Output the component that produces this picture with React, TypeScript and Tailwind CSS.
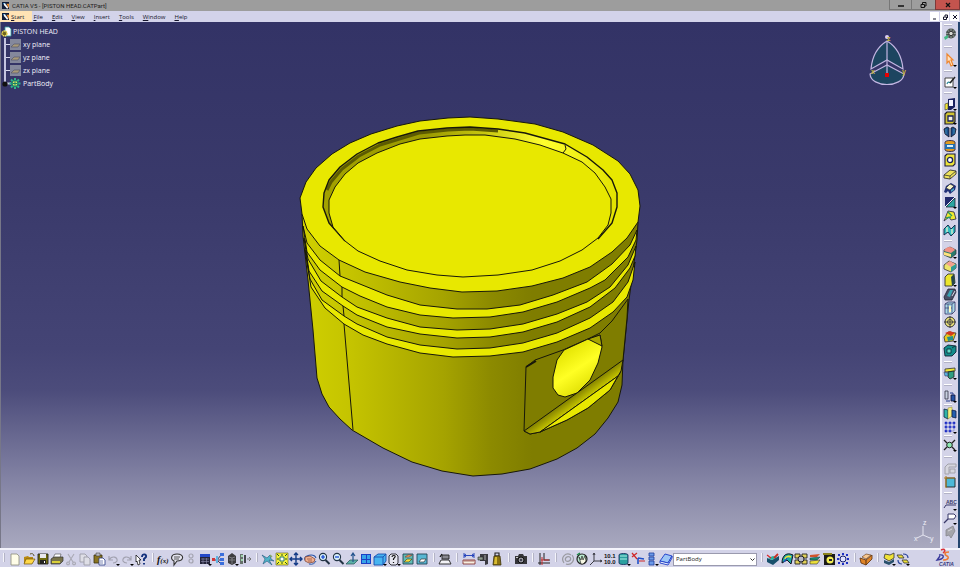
import React from "react";

const ink = "#15152b";

/* ---------- icon artwork, drawn on a 14 x 14 grid ---------- */

const Drop = () => <path d="M10 12h4l-2 2z" fill="#000" />;

const icons: Record<string, React.ReactNode> = {
  New: <path d="M3 2h6l2 2v9H3z" fill="#fffde8" stroke="#8a8a7a" strokeWidth=".8" />,
  Open: <g><path d="M2 5l4-1 1 1h4v6H2z" fill="#b98a14" /><path d="M4 7h9l-3 5H2z" fill="#ffd84a" stroke="#6e5208" strokeWidth=".7" /><path d="M8 2c2-1 4 0 4 2" fill="none" stroke="#5a5020" /></g>,
  Save: <g><path d="M2 2h10v10H2z" fill="#6e6a10" stroke="#222" strokeWidth=".9" /><path d="M4 2h6v4H4z" fill="#e8e8f0" /><path d="M4 8h6v4H4z" fill="#222" /><path d="M8 9h1v2H8z" fill="#fff" /></g>,
  Print: <g><path d="M5 2h6l-1 4H3z" fill="#fff" stroke="#444" strokeWidth=".6" /><path d="M1 7l3-2h9v4l-3 3H1z" fill="#77724a" stroke="#333" strokeWidth=".7" /><path d="M2 9h8v2H2z" fill="#d9cf3a" /></g>,
  Cut: <path d="M4 2l5 8M10 2L5 10M4 10a1.400 1.400 0 1 0 .1 0M10 10a1.400 1.400 0 1 0 .1 0" fill="none" stroke="#a9a9b4" strokeWidth="1.100" />,
  Copy: <g fill="#dedee6" stroke="#9c9ca8" strokeWidth=".9"><path d="M2 2h5l2 2v6H2z" /><path d="M6 5h4l2 2v6H6z" /></g>,
  Paste: <g><path d="M2 3h8v8H2z" fill="#8a7420" stroke="#3a3210" strokeWidth=".8" /><path d="M4 1h4v3H4z" fill="#b9b9c4" stroke="#333" strokeWidth=".5" /><path d="M7 6h4l2 2v5H7z" fill="#fff" stroke="#2a3a86" strokeWidth=".8" /><path d="M8 9h3M8 11h3" stroke="#2a3a86" strokeWidth=".6" /></g>,
  Undo: <g><path d="M3 4v4h4M3 8c3-5 9-3 8 1-1 2-3 2-4 2" fill="none" stroke="#a2a2b0" strokeWidth="1.200" /><Drop /></g>,
  Redo: <g><path d="M11 4v4H7M11 8c-3-5-9-3-8 1 1 2 3 2 4 2" fill="none" stroke="#a2a2b0" strokeWidth="1.200" /><Drop /></g>,
  "What's This?": <g><path d="M2 3l5 5H5l1 4-2 1-1-4-1 1z" fill="#fff" stroke="#000" strokeWidth=".7" /><path d="M8 5c0-4 5-3 4 0l-2 2v2M10 11v1.500" fill="none" stroke="#12307c" strokeWidth="1.900" /></g>,
  Formula: <text x="0" y="11" fontSize="10" fontStyle="italic" fontWeight="bold" fontFamily="Liberation Serif, serif" fill="#111">f<tspan fontSize="7">(x)</tspan></text>,
  Comment: <g><path d="M7 2c8 0 7 7 0 7l-3 4V9C0 7 1 2 7 2z" fill="#e4e4ef" stroke="#333" strokeWidth="1.100" /><path d="M4 5h6M4 7h5" stroke="#333" strokeWidth=".8" /></g>,
  "Knowledge Inspector": <g fill="none" stroke="#a4a4b0" strokeWidth="1.200"><circle cx="7" cy="4" r="2" /><circle cx="7" cy="9" r="2" /></g>,
  "Design Table": <g><path d="M2 2h10v10H2z" fill="#23233a" /><path d="M2 2h10v3H2z" fill="#2448c8" /><path d="M3 7h8M3 9.500h8M5 6v6M8.500 6v6" stroke="#8f8fae" strokeWidth=".6" /><Drop /></g>,
  Structure: <g><path d="M2 8h4M6 8l4-5M6 8h5M6 8l4 4" stroke="#324" strokeWidth=".9" fill="none" /><path d="M1 6h3v3H1z" fill="#d23838" /><path d="M9 1h4v3H9zM9 6h4v3H9zM9 10h4v3H9z" fill="#3a6edc" /><path d="M5 4h2v7H5z" fill="#62b4e0" /></g>,
  Lock: <g><path d="M3 4l4-3 4 3v7l-4 2-4-2z" fill="#3d3d40" /><path d="M4 5l3 1v6M10 5L7 6M4 8h6" stroke="#8b8b90" fill="none" strokeWidth=".8" /><Drop /></g>,
  Equivalent: <g><path d="M2 2h3v10H2z" fill="#68726c" /><path d="M3 3h2v2H3zM3 7h2v2H3z" fill="#9fd4ae" /><path d="M6 3h2v8H6z" fill="#43464c" /><path d="M9 7h4M11 5l2 2-2 2" stroke="#777" fill="none" /></g>,
  "Fly Mode": <g><path d="M1 3l5 3 3-3 1 4 3 2-5-1 3 5-5-4-4 3 2-5z" fill="#4fb4c8" stroke="#23557c" strokeWidth=".6" /><path d="M9 3l2 2" stroke="#8a6" strokeWidth="1.500" /></g>,
  "Fit All In": <g><path d="M1 1h12v12H1z" fill="#f6f23a" stroke="#59591a" strokeWidth=".6" /><path d="M5 5h4v4H5z" fill="#fff" stroke="#276" /><path d="M2 2l2 2M12 2l-2 2M2 12l2-2M12 12l-2-2M7 2v2M7 10v2M2 7h2M10 7h2" stroke="#24502c" fill="none" /></g>,
  Pan: <path d="M7 1v12M1 7h12M5 3l2-2 2 2M5 11l2 2 2-2M3 5L1 7l2 2M11 5l2 2-2 2" fill="none" stroke="#123a86" strokeWidth="1.400" />,
  Rotate: <g><path d="M2 8c-2-5 9-7 11-2" fill="none" stroke="#2a55a8" strokeWidth="1.100" /><path d="M2 5l5-1 5 3-1 3-5 1-4-2z" fill="#f0b090" stroke="#7a3a28" strokeWidth=".7" /><path d="M4 7h5M5 9h4" stroke="#7a3a28" strokeWidth=".6" /><path d="M6 12c4 1 6-1 7-3" stroke="#2a55a8" fill="none" /></g>,
  "Zoom In": <g><circle cx="6" cy="5" r="3.600" fill="#d7f0fa" stroke="#234" strokeWidth="1.100" /><path d="M8.500 8l4 4" stroke="#234" strokeWidth="2" /><path d="M4 5h4M6 3v4" stroke="#0a3cd0" strokeWidth="1.200" /></g>,
  "Zoom Out": <g><circle cx="6" cy="5" r="3.600" fill="#d7f0fa" stroke="#234" strokeWidth="1.100" /><path d="M8.500 8l4 4" stroke="#234" strokeWidth="2" /><path d="M4 5h4" stroke="#0a3cd0" strokeWidth="1.200" /></g>,
  "Normal View": <g><path d="M1 12l4-4h8l-4 4z" fill="#5bb0a8" stroke="#255" strokeWidth=".7" /><path d="M8 10V2M6 4l2-3 2 3" stroke="#22528c" strokeWidth="1.200" fill="none" /></g>,
  "Multi View": <g><path d="M2 2h10v10H2z" fill="#1c3fc4" /><path d="M3 3h4v4H3zM8 3h3v4H8zM3 8h4v3H3zM8 8h3v3H8z" fill="#36a4e8" /></g>,
  "Isometric View": <g><path d="M1 5l4-3h8v7l-3 4H1z" fill="#48b4f0" stroke="#1a4eb0" strokeWidth=".9" /><path d="M1 5h9v8M10 5l3-3" fill="none" stroke="#1a4eb0" strokeWidth=".9" /><Drop /></g>,
  "View Mode": <g><path d="M4 2h5l2 2v7l-2 2H4l-2-2V4z" fill="#e6e6f0" stroke="#33333c" strokeWidth="1" /><path d="M5 5c0-2 4-2 3 0L6.500 7v1M6.500 10v1" stroke="#111" fill="none" strokeWidth="1.200" /><Drop /></g>,
  "Hide Show": <g><path d="M2 2h10v10H2z" fill="#5fbcb4" stroke="#245" strokeWidth=".9" /><path d="M3 10l3-3h5l-3 3z" fill="#f3e23c" stroke="#333" strokeWidth=".6" /><path d="M4 5l3-2h4l-3 2z" fill="#f0b060" stroke="#833" strokeWidth=".6" /></g>,
  "Swap Visible Space": <g><path d="M2 2h10v10H2z" fill="#58b6d2" stroke="#245" strokeWidth=".9" /><path d="M4 10l2-3h5l-2 3z" fill="#fff" stroke="#333" strokeWidth=".7" /></g>,
  Turntable: <g><path d="M3 8h8l2 4H1z" fill="#f2f2f6" stroke="#222" strokeWidth=".9" /><path d="M4 3h7v4H4z" fill="#888890" stroke="#222" strokeWidth=".9" /><path d="M2 5l2-3" stroke="#111" strokeWidth="1.300" /></g>,
  "Measure Between": <g><path d="M2 1v5M12 1v5M2 3.500h10M4 2L2 3.500 4 5M10 2l2 1.500L10 5" stroke="#1738b8" fill="none" strokeWidth=".9" /><path d="M1 8h12v4H1z" fill="#f7efe0" stroke="#7c2424" strokeWidth=".8" /><path d="M3 8v2M5 8v2M7 8v2M9 8v2M11 8v2" stroke="#7c2424" strokeWidth=".6" /></g>,
  "Measure Item": <g><path d="M4 2h8v10l-3 1V9H4z" fill="#3c3c42" /><path d="M2 5h5v3H2z" fill="#8f9c8f" stroke="#222" strokeWidth=".6" /><path d="M9 3v5" stroke="#aaa" /></g>,
  "Measure Inertia": <g><path d="M5 1h4v3H5z" fill="none" stroke="#222" strokeWidth="1.100" /><path d="M4 4h6l1 9H3z" fill="#8b7211" stroke="#3a3008" strokeWidth=".8" /><path d="M5 5h2v7H4z" fill="#d8bb32" /></g>,
  Capture: <g><path d="M1 4h3l1-2h4l1 2h3v8H1z" fill="#36363a" /><circle cx="7" cy="8" r="3" fill="#96969e" stroke="#111" /><circle cx="7" cy="8" r="1" fill="#223" /><path d="M2 5h2v1H2z" fill="#ccc" /></g>,
  "Axis Grid": <g><path d="M3 1v10h10M7 1v7h6M1 11h2v2" fill="none" stroke="#222" strokeWidth="1" /><path d="M4 8h8M5 5v8" stroke="#c22a2a" strokeWidth="1" /></g>,
  Update: <g fill="none" stroke="#999aa0" strokeWidth="1.200"><path d="M3 11C-1 5 5 0 10 3M11 3c4 5-1 11-6 9" /><path d="M5 9c-2-3 1-5 4-4M9 5c2 3-1 5-4 4" /></g>,
  "Manual Update": <g><circle cx="7" cy="7" r="5" fill="#b8e8d0" stroke="#222" strokeWidth="1.200" /><path d="M4 5l2 3 1-4 1 4 2-4 1 5-3 3H6z" fill="#f7f7e4" stroke="#222" strokeWidth=".7" /><path d="M2 3l3-2" stroke="#198a45" strokeWidth="1.500" /></g>,
  "Axis System": <path d="M5 1v8h8M5 9l-4 4M4 3l1-2 1 2M11 8l2 1-2 1" stroke="#3c3c44" fill="none" strokeWidth="1" />,
  "Mean Dimensions": <g fontSize="6" fontWeight="bold" fontFamily="Liberation Sans, sans-serif" fill="#111"><text x="1" y="6">10.1</text><text x="1" y="12">10.0</text></g>,
  "Create Datum": <g><path d="M2 3c0-2 9-2 9 0v8c0 2-9 2-9 0z" fill="#2ba0a0" stroke="#125" strokeWidth=".8" /><path d="M3 4h7M3 7h7" stroke="#aef0e8" /><Drop /></g>,
  "Only Part": <g><path d="M7 6l6 1M7 6v6" stroke="#2050c8" strokeWidth="1.600" fill="none" /><path d="M1 1l5 6M6 1L1 5M8 9h6" stroke="#d02828" strokeWidth="1.200" /></g>,
  "Select Body": <g><path d="M4 1h5v3H4zM4 5h5v3H4zM4 9h5v4H4z" fill="#6c9ae8" stroke="#1c3c9c" strokeWidth=".8" /><Drop /></g>,
  "Catalog Browser": <g><path d="M1 9l5-7 7 2-4 7z" fill="#9cc6f6" stroke="#1a3ac8" strokeWidth=".9" /><path d="M1 9v2l8 2 4-7V4L9 11z" fill="#f2f6ff" stroke="#1a3ac8" strokeWidth=".9" /></g>,
  "Draft Analysis": <g><path d="M1 6l5 2 7-4v4l-6 5-6-3z" fill="#17506c" /><path d="M2 6l5-2 4 1-5 3z" fill="#26b49c" /><path d="M8 6l4-4" stroke="#ca2c20" strokeWidth="1.800" /><path d="M1 3l4 3" stroke="#d22" strokeWidth="1.100" /></g>,
  "Curvature Analysis": <g><path d="M2 11C2 3 7 0 13 3l-2 9-4-4z" fill="#1fa9a0" stroke="#112" strokeWidth="1" /><path d="M5 7c1-3 4-3 6-2" stroke="#f0e33a" strokeWidth="1.600" fill="none" /><path d="M4 10l3-4" stroke="#2146c8" strokeWidth="1.200" /></g>,
  "Tap Analysis": <g><path d="M1 2h5v4H1zM8 2h5v4H8zM1 8h5v4H1zM8 8h5v4H8z" fill="#e2d15a" stroke="#222" strokeWidth=".9" /><circle cx="7" cy="7" r="3" fill="#b9b9c8" stroke="#222" /></g>,
  "Wall Thickness": <g><path d="M2 3l10-1-3 3H2z" fill="#d2542c" /><path d="M2 6l10-1-3 3H2z" fill="#1b8a6c" stroke="#134" strokeWidth=".5" /><path d="M2 9l10-1-3 4H2z" fill="#ece03a" stroke="#333" strokeWidth=".6" /></g>,
  Render: <g><path d="M2 2h11v11H2z" fill="#1a1a1a" /><path d="M1 1h9v2H1z" fill="#8c841d" /><circle cx="8" cy="8" r="3.500" fill="#f3ee54" /><path d="M7 7h3v2H7z" fill="#223" /></g>,
  "Apply Material": <g fill="#1d2fc4"><path d="M2 2h2v2H2zM6 1h2v2H6zM10 2h2v2h-2zM1 6h2v2H1zM11 6h2v2h-2zM2 10h2v2H2zM6 11h2v2H6zM10 10h2v2h-2z" /><circle cx="7" cy="7" r="3" fill="#dfe2ff" stroke="#16206c" /></g>,
  "Power Copy": <g><path d="M1 6l6 2 6-5v4l-6 6-5-2z" fill="#df8428" stroke="#5c300a" strokeWidth=".8" /><path d="M3 5l4-3 5 1-5 4z" fill="#f7c690" stroke="#5c300a" strokeWidth=".6" /><path d="M7 8v5" stroke="#5c300a" /></g>,
  "User Feature": <g><path d="M3 2l5 1 4-2v5L7 9 2 6z" fill="#f0e238" stroke="#333" strokeWidth=".8" /><path d="M2 8l5 2 5-3v3l-5 3-5-2z" fill="#28506c" /><Drop /></g>,
  Instantiate: <g><path d="M1 3h5l2 3H3zM6 8h5l2 3H8z" fill="#f0e238" stroke="#333" strokeWidth=".8" /><path d="M7 2c4 0 5 2 5 4M2 8c0 3 2 4 4 4" stroke="#28429c" strokeWidth="1.200" fill="none" /><Drop /></g>,

  "Part Design": <g><circle cx="8" cy="6.500" r="5" fill="#4b5450" /><path d="M8 1v11M3 6.500h10M4.500 3l7 7M11.500 3l-7 7" stroke="#9ba29c" strokeWidth=".9" /><circle cx="8" cy="6.500" r="2.200" fill="#d5d8d2" stroke="#333" /><path d="M1 10l4-2v3l-3 2z" fill="#43b884" /></g>,
  Select: <g><path d="M4 1l6 6H8l2 5-2 1-2-5-2 2z" fill="#ffe2bf" stroke="#f0862c" strokeWidth="1.200" /><Drop /></g>,
  Sketch: <g><path d="M2 3h8v9H2z" fill="#fff" stroke="#333" strokeWidth=".9" /><path d="M4 9c1-4 3 0 4-2" stroke="#2a8a9c" fill="none" strokeWidth="1.200" /><path d="M7 8l5-6" stroke="#222" strokeWidth="1.500" /><Drop /></g>,
  Pad: <g><path d="M5 2l7-1v9l-4 3H5z" fill="#18205e" /><path d="M6 3h4v6H6z" fill="#f4f4ff" /><path d="M2 7l3-1v6l-3 1z" fill="#f2e63a" stroke="#333" strokeWidth=".6" /><Drop /></g>,
  Pocket: <g><path d="M2 3l2-2h8v10l-2 2H2z" fill="#cfc332" stroke="#1b1b30" strokeWidth="1.200" /><path d="M5 5h5v5H5z" fill="#f5f3e0" stroke="#18205e" strokeWidth="1.300" /><Drop /></g>,
  Shaft: <g><path d="M1 4l3-2 2 1v9l-4-3zM8 3l2-1 3 2-1 5-4 3z" fill="#1c4f8c" stroke="#112" strokeWidth=".8" /><path d="M3 4v5M11 4v5" stroke="#4a9ab8" strokeWidth=".8" /></g>,
  Groove: <g><path d="M2 3c1-2 9-2 10 0v8c-1 2-9 2-10 0z" fill="#e29c1e" stroke="#262650" strokeWidth=".9" /><path d="M2 5h10v5H2z" fill="#256fae" /><path d="M4 6h6v2H4z" fill="#d8f0fa" /></g>,
  Hole: <g><path d="M2 3l2-2h8v10l-2 2H2z" fill="#ede43a" stroke="#1b1b40" strokeWidth="1.100" /><circle cx="7" cy="7" r="2.600" fill="#fff" stroke="#18205e" strokeWidth="1.300" /></g>,
  Rib: <g><path d="M1 8l6-5 6 1v3l-6 5-6-1z" fill="#ede25a" stroke="#333" strokeWidth=".9" /><path d="M1 8l6 1 6-5M7 9v3" fill="none" stroke="#333" strokeWidth=".8" /></g>,
  Slot: <g><path d="M1 11l2-6 5-3 5 3-1 4-5 4-2-3-2 2z" fill="#1f2f78" /><path d="M3 7l4-4 4 2-4 4z" fill="#f8f4c8" stroke="#222" strokeWidth=".6" /><path d="M8 9l3-2v2l-3 2z" fill="#4aa6c4" /></g>,
  Stiffener: <g><path d="M2 2h10L2 12z" fill="#20286c" /><path d="M12 3v9H3z" fill="#2aa5a0" stroke="#112" strokeWidth=".7" /><path d="M2 12L12 2" stroke="#e8f4ff" /><Drop /></g>,
  Loft: <g><path d="M1 12l4-10 6 1 2 7-5 1-2-3z" fill="#f0ea30" stroke="#224" strokeWidth=".8" /><path d="M5 3l4 4M3 9l5-1" stroke="#2a9a60" strokeWidth="1.400" /></g>,
  "Removed Loft": <g><path d="M1 12V6l4-4 3 4 4-4v7l-4 4-3-4z" fill="#34bcc0" stroke="#124" strokeWidth=".9" /><path d="M4 4v5M9 6v5" stroke="#f6f6d0" strokeWidth="1.200" /></g>,
  Fillet: <g><path d="M1 8V5l6-3 6 3v4l-5 4-7-3z" fill="#2a7c6c" stroke="#333" strokeWidth=".7" /><path d="M1 6c2-5 8-5 11-1L8 8z" fill="#f09084" /><path d="M1 7l7 2v3l-7-2z" fill="#ffe27c" /><Drop /></g>,
  Chamfer: <g><path d="M1 6l5-4 7 3v4l-5 4-7-3z" fill="#ede46a" stroke="#333" strokeWidth=".8" /><path d="M3 5l4-3 5 3-4 3z" fill="#f3a090" /><path d="M8 8l5-3v4l-5 4z" fill="#2e9c98" /></g>,
  "Draft Angle": <g><path d="M2 4l3-3h6l1 9-3 3H2z" fill="#ece52c" stroke="#333" strokeWidth=".9" /><path d="M8 4l3-3 1 9-3 3z" fill="#27464c" /><Drop /></g>,
  Shell: <g><path d="M1 10L5 2h7l1 3-4 8H2z" fill="#4a4f68" stroke="#223" strokeWidth=".8" /><path d="M4 9l3-6h3l-3 7z" fill="#3ba4b4" /><path d="M9 9l3-5" stroke="#d5d6e4" /></g>,
  Thickness: <g><path d="M2 3l3-2h7v9l-3 3H2z" fill="#a8d8e8" stroke="#336" strokeWidth=".8" /><path d="M2 3h7v10M9 3l3-2M5 3v9M2 7h7" stroke="#336" fill="none" strokeWidth=".7" /><path d="M6 5h2v6H6z" fill="#fffbc0" /></g>,
  Thread: <g><circle cx="7" cy="7" r="5" fill="#efe57a" stroke="#333" strokeWidth="1" /><circle cx="7" cy="7" r="2.500" fill="none" stroke="#555" /><path d="M7 1v12M1 7h12" stroke="#223" strokeWidth=".8" /></g>,
  "Split Body": <g><path d="M1 8l4-5 8 1-3 8-8 1z" fill="#e8c81e" stroke="#333" strokeWidth=".8" /><path d="M2 4l5-2 5 2-4 3z" fill="#d23a20" /><path d="M4 8l6-1v4l-5 1z" fill="#25908c" /><Drop /></g>,
  "Thick Surface": <g><path d="M1 5l4-3 8 1v6l-4 4H2z" fill="#138c8a" stroke="#123" strokeWidth=".9" /><path d="M4 6h4v4H4zM9 5l3-2" fill="#64dcc8" stroke="#123" strokeWidth=".8" /></g>,
  Assemble: <g><path d="M2 3l10-1v3l-10 1z" fill="#f0e636" stroke="#333" strokeWidth=".8" /><path d="M5 6l6-1v6l-4 2-2-2z" fill="#2f9c80" stroke="#222" strokeWidth=".8" /><path d="M1 6l4 1v3H2z" fill="#5bb2de" stroke="#224" strokeWidth=".5" /><Drop /></g>,
  Translation: <g><path d="M2 2h3v8H2z" fill="#c8d0e0" stroke="#334" strokeWidth=".8" /><path d="M8 6h4v6H8z" fill="#2453a4" stroke="#113" strokeWidth=".8" /><path d="M3 12h4M7 4h3v2" stroke="#223a8c" fill="none" /><Drop /></g>,
  Mirror: <g><path d="M1 3l4 1v9l-4-2z" fill="#2fb4a8" stroke="#124" strokeWidth=".8" /><path d="M5 2l4-1v9l-4 3z" fill="#f4ef84" stroke="#8a8430" strokeWidth=".5" /><path d="M9 4l4 1v7l-4-1z" fill="#235fae" stroke="#124" strokeWidth=".8" /></g>,
  Pattern: <g><path d="M2 2h2v2H2zM6 2h2v2H6zM10 2h2v2h-2zM2 6h2v2H2zM6 6h2v2H6zM10 6h2v2h-2zM2 10h2v2H2zM6 10h2v2H6z" fill="#1b28c4" stroke="#1b28c4" strokeWidth=".5" /><path d="M3 3h8v8H3zM7 3v8M3 7h8" fill="none" stroke="#5a64cc" strokeWidth=".5" /><Drop /></g>,
  Scaling: <g><path d="M1 2l3 3M12 2L9 5M1 12l3-3M12 12L9 9" stroke="#222" strokeWidth="1.300" /><circle cx="6.500" cy="7" r="2.800" fill="#8ce8b0" stroke="#222" /><Drop /></g>,
  Group: <g fill="#d5d5de" stroke="#a2a2aa"><path d="M2 6l3-3h8v3H6v7H2z" /><path d="M7 8h5v4H7z" /></g>,
  "Bounding Box": <g><path d="M3 3h9v9H3z" fill="#4cb8d8" stroke="#222" strokeWidth=".9" /><path d="M1 3h11M3 1v12" stroke="#b08022" strokeWidth="1.100" /></g>,
  "Text with Leader": <g><text x="3" y="7" fontSize="5" fontWeight="bold" fontFamily="Liberation Sans, sans-serif" fill="#39396a">ABC</text><path d="M1 11l2-3h10" stroke="#39396a" fill="none" /><Drop /></g>,
  "Flag Note": <g><path d="M5 3h6l2 2-2 3H5z" fill="#fff" stroke="#39396a" /><path d="M5 8l-4 4" stroke="#39396a" strokeWidth="1.300" /><Drop /></g>,
  "View Plane": <g><path d="M3 5l7-4 2 5-4 7-2-3-3 1z" fill="#a5a5ab" stroke="#85858d" strokeWidth=".8" /><path d="M5 6l4-2" stroke="#d5d5da" /></g>,
};

type BarGroup = { names: string[]; gap: string; width?: string };

const bottomGroups: BarGroup[] = [
  { gap: "w-2", names: ["New", "Open", "Save", "Print", "Cut", "Copy", "Paste", "Undo", "Redo", "What's This?"] },
  { gap: "w-[9px]", width: "w-[95px]", names: ["Formula", "Comment", "Knowledge Inspector", "Design Table", "Structure", "Lock", "Equivalent"] },
  { gap: "w-[9px]", names: ["Fly Mode", "Fit All In", "Pan", "Rotate", "Zoom In", "Zoom Out", "Normal View", "Multi View", "Isometric View", "View Mode", "Hide Show", "Swap Visible Space"] },
  { gap: "w-[9px]", names: ["Turntable"] },
  { gap: "w-[10px]", names: ["Measure Between", "Measure Item", "Measure Inertia"] },
  { gap: "w-[10px]", names: ["Capture"] },
  { gap: "w-[9px]", names: ["Axis Grid"] },
  { gap: "w-[10px]", names: ["Update", "Manual Update", "Axis System", "Mean Dimensions", "Create Datum", "Only Part", "Select Body", "Catalog Browser"] },
];

const analysisGroups: BarGroup[] = [
  { gap: "w-[9px]", names: ["Draft Analysis", "Curvature Analysis", "Tap Analysis", "Wall Thickness", "Render", "Apply Material"] },
  { gap: "w-[9px]", names: ["Power Copy"] },
  { gap: "w-[9px]", names: ["User Feature", "Instantiate"] },
];

const sideGroups: { names: string[]; gap: string }[] = [
  { gap: "h-[5px]", names: ["Part Design"] },
  { gap: "h-3", names: ["Select"] },
  { gap: "h-2", names: ["Sketch"] },
  { gap: "h-2", names: ["Pad", "Pocket", "Shaft", "Groove", "Hole", "Rib", "Slot", "Stiffener", "Loft", "Removed Loft"] },
  { gap: "h-2", names: ["Fillet", "Chamfer", "Draft Angle", "Shell", "Thickness", "Thread", "Split Body", "Thick Surface"] },
  { gap: "h-[9px]", names: ["Assemble"] },
  { gap: "h-[9px]", names: ["Translation"] },
  { gap: "h-[3px]", names: ["Mirror", "Pattern"] },
  { gap: "h-1", names: ["Scaling"] },
  { gap: "h-[9px]", names: ["Group", "Bounding Box"] },
  { gap: "h-2", names: ["Text with Leader", "Flag Note", "View Plane"] },
];

function Tool({ name }: { name: string }) {
  return (
    <button type="button" aria-label={name} className="flex h-[14px] w-[14px] min-w-0 shrink items-center justify-center">
      <svg viewBox="0 0 14 14" className="h-[14px] w-[14px] shrink-0 overflow-visible" aria-hidden="true">{icons[name]}</svg>
    </button>
  );
}

function BottomGroup({ names, gap, width = "" }: BarGroup) {
  return (
    <>
      <div className={`${gap} flex h-3 shrink-0 items-start justify-center`}>
        <div className="h-[9px] w-[2px] border-r border-[#b4b4c6] bg-[#f4f4fa]" />
      </div>
      <div className={`flex shrink-0 items-center ${width}`} role="group">
        {names.map((n) => <Tool key={n} name={n} />)}
      </div>
    </>
  );
}

function AppLogo() {
  return (
    <svg viewBox="0 0 8 8" className="h-[7px] w-[7px] shrink-0" aria-hidden="true">
      <path d="M0 0h8v8H0z" fill="#101c38" />
      <path d="M1 1h3L3 4z" fill="#4ea6e0" />
      <path d="M3 1l4 5-1 2-4-5z" fill="#fff" />
      <path d="M5 2h3v5z" fill="#f09030" />
    </svg>
  );
}

const menus = ["File", "Edit", "View", "Insert", "Tools", "Window", "Help"];

function MenuLabel({ text }: { text: string }) {
  return <><span className="underline">{text[0]}</span>{text.slice(1)}</>;
}

/* ---------- 3D view ---------- */

const outer = "300,198 306,182 316,168 332,154 350,143 371,134 397,126 420,121 448,118 470,117 498,119 535,124 563,132 593,145 618,161 630,174 638,190 640,206 638,222 627,238 612,252 590,267 563,278 532,286 497,291 462,292 430,288 400,282 365,272 339,260 320,246 307,229 302,214";
const rim = "323,207 324,193 329,180 340,167 357,154 378,143 397,137 418,131 447,128 470,127 498,129 525,133 565,144 587,157 603,170 612,180 617,193 617,207 612,223 598,239 560,261 463,277 380,261 345,241 329,223";
const floor = "329,200 329,213 333,227 345,241 358,251 380,261 407,270 437,275 463,277 498,275 532,270 560,261 582,250 598,238 608,225 611,213 611,199 605,187 595,173 582,162 563,153 540,145 515,139 485,135 465,135 447,136 420,139 400,144 377,153 358,163 345,174 335,187";
const body = "302,214 303,236 308,280 313,330 317,378 322,394 329,407 340,419 352,430 383,448 412,462 442,471 473,476 502,474 530,469 557,459 577,448 595,434 608,418 618,402 622,385 623,360 629,300 633,270 637,240 638,222 470,200";
const rings = [
  "303,226 307,243 320,260 340,276 350,280 387,295 420,305 457,309 487,309 520,305 553,295 587,282 612,264 630,245 637,230 636,240 628,257 605,280 590,288 557,302 523,312 490,317 453,318 420,315 387,307 360,296 342,287 320,270 307,252",
  "304,238 308,259 321,281 342,297 357,307 387,318 420,327 457,330 490,329 523,324 557,314 587,302 610,287 628,265 636,246 635,256 630,268 615,288 590,307 557,322 523,332 490,337 457,338 420,334 387,327 357,315 343,306 322,291 309,271",
  "305,250 310,279 322,300 344,316 357,324 387,337 420,345 457,349 490,348 523,343 557,333 590,318 613,302 628,282 635,262 633,280 627,297 613,312 590,328 557,342 523,352 490,356 453,357 420,353 387,344 363,335 344,324 325,308 311,287",
];

function PistonModel() {
  return (
    <svg viewBox="1 22 939 526" className="absolute inset-0 h-full w-full" role="img" aria-label="Piston head model">
      <defs>
        <linearGradient id="side" gradientUnits="userSpaceOnUse" x1="302" y1="0" x2="640" y2="0">
          <stop offset="0" stopColor="#d0d000" />
          <stop offset=".15" stopColor="#c4c300" />
          <stop offset=".42" stopColor="#a5a300" />
          <stop offset=".56" stopColor="#8c8a00" />
          <stop offset=".68" stopColor="#7f7d00" />
          <stop offset="1" stopColor="#7f7d00" />
        </linearGradient>
        <linearGradient id="groove" gradientUnits="userSpaceOnUse" x1="323" y1="0" x2="617" y2="0">
          <stop offset="0" stopColor="#a3a200" />
          <stop offset=".35" stopColor="#9a9900" />
          <stop offset=".55" stopColor="#c8c710" />
          <stop offset=".75" stopColor="#ffff2e" />
          <stop offset="1" stopColor="#e2e200" />
        </linearGradient>
        <linearGradient id="bore" gradientUnits="userSpaceOnUse" x1="560" y1="350" x2="588" y2="392">
          <stop offset="0" stopColor="#e2e200" />
          <stop offset=".5" stopColor="#ffff24" />
          <stop offset="1" stopColor="#dcdb00" />
        </linearGradient>
        <linearGradient id="ledge" gradientUnits="userSpaceOnUse" x1="570" y1="397" x2="578" y2="408">
          <stop offset="0" stopColor="#7f7d00" />
          <stop offset="1" stopColor="#d9d800" />
        </linearGradient>
      </defs>
      <g stroke="#17170a" strokeWidth="1" strokeLinejoin="round">
        <polygon points={body} fill="url(#side)" />
        {rings.map((r) => <polygon key={r} points={r} fill="#e8e800" />)}
        <polygon points={outer} fill="#e8e800" />
        <polygon points={rim} fill="url(#groove)" stroke="none" />
        <path d="M327 190L331 182 342 169 359 156 380 145 419 133 448 130 470 129 498 131" fill="none" stroke="#5c5b00" strokeWidth="3" />
        <path d="M345 241L329 223 323 207 324 193 329 180 340 167 357 154 378 143 397 137 418 131 447 128 470 127 498 129 525 133 565 144 587 157 603 170 612 180 617 193 617 207 612 223 598 239" fill="none" strokeWidth="1.400" />
        <polygon points={floor} fill="#e8e800" />
        <path d="M563 153l3-4-1-4" fill="none" />
        <path d="M339 260l1 16M342 287v10M343 306l1 10M344 324l9 106" fill="none" />
        <polygon points="526,367 535,360 563,350 590,338 600,333 612,321 628,299 627,318 623,360 620,373 610,390 588,408 567,420 540,432 530,434 524,431" fill="#7f7d00" />
        <path d="M526 367l10-6" fill="none" strokeWidth="2" />
        <polygon points="564,350 557,360 553,377 553,388 558,395 565,397 577,393 590,380 598,363 602,347 600,335 588,339" fill="url(#bore)" />
        <path d="M588 339L600 335 602 346z" fill="#a7a500" />
        <polygon points="524,431 623,360 621,371 618,376 540,432 530,434" fill="url(#ledge)" />
        <polygon points="540,432 618,376 610,390 588,408 567,420" fill="#e8e800" />
      </g>
    </svg>
  );
}

function Compass() {
  return (
    <svg viewBox="0 0 42 54" className="absolute right-8 top-[11px] h-[54px] w-[42px]" role="img" aria-label="Compass">
      <g fill="#1d4560" stroke="#c3b6e2" strokeWidth="1.200">
        <path d="M21 8C11 14 6 25 5 36l16-9 16 9C36 25 31 14 21 8z" />
        <path d="M21 32L4 41c1 14 33 14 34 0z" />
        <path d="M21 8v32" />
      </g>
      <circle cx="21" cy="4" r="2" fill="#dccdf2" />
      <path d="M19 40h4v4h-4z" fill="#e60000" />
      <g fontFamily="Liberation Sans, sans-serif" fontSize="7" fontWeight="bold" fill="#c8b83c">
        <text x="21" y="8">z</text><text x="5" y="41">x</text><text x="36" y="41">y</text>
      </g>
    </svg>
  );
}

function Triad() {
  return (
    <svg viewBox="0 0 24 24" className="absolute bottom-1 right-1 h-6 w-6" aria-hidden="true">
      <path d="M11 6v9l-6 3M11 15l7 3" fill="none" stroke="#e4e4f0" />
      <g fontFamily="Liberation Sans, sans-serif" fontSize="7" fill="#f0f0f8">
        <text x="11" y="5">z</text><text x="2" y="21">x</text><text x="18" y="21">y</text>
      </g>
    </svg>
  );
}

function PlaneIcon() {
  return (
    <svg viewBox="0 0 11 11" className="h-[11px] w-[11px]" aria-hidden="true">
      <path d="M0 0h11v11H0z" fill="#84889c" />
      <path d="M1 8l3-3h6L8 8z" fill="#a99a78" stroke="#55586c" strokeWidth=".7" />
    </svg>
  );
}

function SpecTree() {
  return (
    <ul className="absolute left-0 top-[3px] text-[7px] leading-[13px] text-[#f0f0fa]">
      <li className="flex h-[13px] items-center gap-px">
        <svg viewBox="0 0 11 12" className="h-3 w-[11px]" aria-hidden="true">
          <path d="M4 1h4l2 2v7H4z" fill="#fff" stroke="#3aa0a0" strokeWidth=".8" />
          <circle cx="3.500" cy="7.500" r="2.500" fill="#6d6420" stroke="#f2de58" strokeWidth="1.500" strokeDasharray="1.500 .6" />
        </svg>
        PISTON HEAD
      </li>
      {["xy plane", "yz plane", "zx plane"].map((p) => (
        <li key={p} className="flex h-[13px] items-center">
          <span className="ml-[3px] flex h-full w-[6px] items-center border-l-2 border-[#c4c4e0]"><span className="h-px w-full bg-[#d8d8ee]" /></span>
          <PlaneIcon />
          <span className="ml-[2px]">{p}</span>
        </li>
      ))}
      <li className="flex h-[13px] items-center">
        <svg viewBox="0 0 20 13" className="h-[13px] w-5" aria-hidden="true">
          <path d="M4 0v6.500h6" stroke="#c4c4e0" strokeWidth="2" fill="none" />
          <circle cx="4" cy="7" r="2.600" fill="#111" />
          <path d="M14 1v11M8.500 6.500h11M10 2.500l8 8M18 2.500l-8 8" stroke="#2fb58c" strokeWidth="2" />
          <circle cx="14" cy="6.500" r="3" fill="#d8e85c" stroke="#17806c" strokeWidth="1.200" />
          <path d="M14 4v5M11.500 6.500h5" stroke="#17806c" />
        </svg>
        <span className="ml-[2px]">PartBody</span>
      </li>
    </ul>
  );
}

export default function App() {
  return (
    <div className="flex h-screen flex-col overflow-hidden bg-[#d5d5e8] font-['Open_Sans','Noto_Sans',sans-serif] text-[#15152b]">
      <header className="flex h-[11px] shrink-0 items-center bg-[#9d9d9d] pl-[2px] text-[6px] leading-none text-[#1c1c1c]">
        <AppLogo />
        <h1 className="ml-[3px] font-['Roboto',sans-serif]">CATIA V5 - [PISTON HEAD.CATPart]</h1>
        <div className="ml-auto flex h-full">
          <button type="button" aria-label="Minimize" className="flex h-[10px] w-[23px] items-center justify-center border-x border-b border-[#777]">
            <svg viewBox="0 0 6 6" className="h-[6px] w-[6px]"><path d="M0 4h6" stroke="#111" strokeWidth="1.500" /></svg>
          </button>
          <button type="button" aria-label="Restore" className="flex h-[10px] w-[23px] items-center justify-center border-b border-[#777]">
            <svg viewBox="0 0 7 6" className="h-[6px] w-[7px]"><path d="M1 2.500h3.500v3H1zM2.500 2V.5H6V4H5" fill="none" stroke="#111" /></svg>
          </button>
          <button type="button" aria-label="Close" className="flex h-[10px] w-[25px] items-center justify-center border-x border-b border-[#7d3a3a] bg-[#c4544e]">
            <svg viewBox="0 0 6 6" className="h-[6px] w-[6px]"><path d="M1 1l4 4M5 1L1 5" stroke="#111" strokeWidth="1.300" /></svg>
          </button>
        </div>
      </header>

      <nav aria-label="Menu" className="flex h-[11px] shrink-0 items-center bg-[#d3d3ea] text-[6px] leading-none">
        <button type="button" className="mr-px flex h-full items-center gap-[2px] bg-[#ffe3b4] pl-[2px] pr-2"><AppLogo /><span><MenuLabel text="Start" /></span></button>
        <div className="flex gap-[9px]">
          {menus.map((m) => <button key={m} type="button"><MenuLabel text={m} /></button>)}
        </div>
        <div className="ml-auto flex h-[9px] gap-px pr-px">
          {["M1 5h3", "M1.500 3h3v2.500h-3zM3 2.500V1h2.500v3", "M1 1l4 4M5 1L1 5"].map((d, i) => (
            <button key={d} type="button" aria-label={["Minimize document", "Restore document", "Close document"][i]} className="flex w-[9px] items-center justify-center bg-white">
              <svg viewBox="0 0 6 6" className="h-[6px] w-[6px]"><path d={d} fill="none" stroke={ink} /></svg>
            </button>
          ))}
        </div>
      </nav>

      <div className="flex min-h-0 flex-1">
        <main className="relative min-w-0 flex-1 overflow-hidden border-l border-[#777788] bg-[linear-gradient(to_bottom,#333366_0%,#3a3a6b_33%,#444475_62%,#4c4c7b_70%,#8383a4_87%,#a9a9bf_100%)]">
          <PistonModel />
          <SpecTree />
          <Compass />
          <Triad />
        </main>
        <aside aria-label="Part design tools" className="w-5 shrink-0 border-l-2 border-r-2 border-l-[#f4f4fc] border-r-[#24456e] bg-[#d3d3e8]">
          <div className="flex flex-col items-center">
            {sideGroups.map((g) => (
              <React.Fragment key={g.names[0]}>
                <div className={`${g.gap} flex w-full items-center pl-[2px]`}>
                  <div className="h-[2px] w-2 border-b border-[#b3b3c6] bg-white" />
                </div>
                {g.names.map((n) => <Tool key={n} name={n} />)}
              </React.Fragment>
            ))}
          </div>
        </aside>
      </div>

      <footer className="flex h-[19px] shrink-0 items-center border-t-2 border-[#f4f4fc] bg-[#d3d3e8] pt-px">
        {bottomGroups.map((g) => <BottomGroup key={g.names[0]} {...g} />)}
        <div className="relative h-[13px] w-[84px] shrink-0">
          <select aria-label="Active body" className="block h-full w-full appearance-none border border-[#9a9aae] bg-white pl-[2px] text-[6px] leading-none text-[#222]">
            <option>PartBody</option>
          </select>
          <svg viewBox="0 0 5 4" className="pointer-events-none absolute right-[2px] top-[5px] h-1 w-[5px]" aria-hidden="true"><path d="M.5 .5l2 2 2-2" fill="none" stroke="#333" /></svg>
        </div>
        {analysisGroups.map((g) => <BottomGroup key={g.names[0]} {...g} />)}
        <svg viewBox="0 0 24 18" className="ml-auto mr-[2px] h-[18px] w-6 shrink-0 overflow-visible" role="img" aria-label="CATIA">
          <path d="M7 0c4-2 5 1 2 3" fill="none" stroke="#d8343c" strokeWidth="1.500" />
          <path d="M5 5c6-1 6 4-2 5l3-4" fill="none" stroke="#3a3a9c" strokeWidth="1.400" />
          <path d="M15 2c-6 0-4 3-2 4s2 4-4 4" fill="none" stroke="#ee7c34" strokeWidth="1.600" />
          <text x="5" y="16" fontSize="5" fontWeight="bold" fontStyle="italic" fontFamily="Liberation Sans, sans-serif" fill="#3a3a80">CATIA</text>
        </svg>
      </footer>
    </div>
  );
}
